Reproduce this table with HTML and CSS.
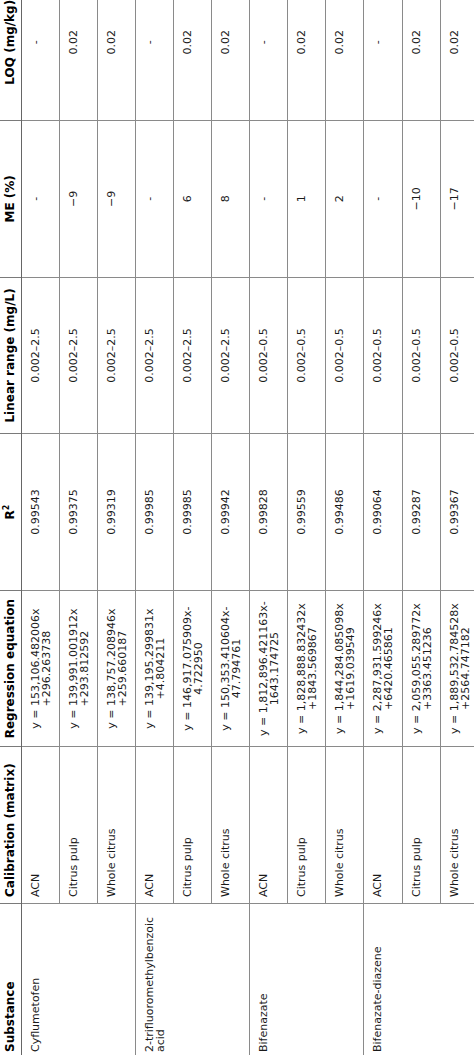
FILE: index.html
```html
<!DOCTYPE html>
<html lang="en">
<head>
<meta charset="utf-8">
<title>Calibration table</title>
<link rel="stylesheet" href="styles.css">
</head>
<body>
<div class="page">
<table class="data">
<colgroup>
<col class="c-first"><col class="c"><col class="c"><col class="c"><col class="c"><col class="c"><col class="c">
</colgroup>
<thead>
<tr>
<th class="l">Substance</th>
<th class="l">Calibration (matrix)</th>
<th>Regression equation</th>
<th>R<sup>2</sup></th>
<th>Linear range (mg/L)</th>
<th>ME (%)</th>
<th>LOQ (mg/kg)</th>
</tr>
</thead>
<tbody>
<tr>
<td rowspan="3" class="l sub">Cyflumetofen</td>
<td class="l">ACN</td>
<td>y = 153,106.482006x<br>+296.263738</td>
<td>0.99543</td><td>0.002–2.5</td><td>-</td><td>-</td>
</tr>
<tr>
<td class="l">Citrus pulp</td>
<td>y = 139,991.001912x<br>+293.812592</td>
<td>0.99375</td><td>0.002–2.5</td><td>−9</td><td>0.02</td>
</tr>
<tr>
<td class="l">Whole citrus</td>
<td>y = 138,757.208946x<br>+259.660187</td>
<td>0.99319</td><td>0.002–2.5</td><td>−9</td><td>0.02</td>
</tr>
<tr>
<td rowspan="3" class="l sub">2-trifluoromethylbenzoic<br>acid</td>
<td class="l">ACN</td>
<td>y = 139,195.299831x<br>+4.804211</td>
<td>0.99985</td><td>0.002–2.5</td><td>-</td><td>-</td>
</tr>
<tr>
<td class="l">Citrus pulp</td>
<td>y = 146,917.075909x-<br>4.722950</td>
<td>0.99985</td><td>0.002–2.5</td><td>6</td><td>0.02</td>
</tr>
<tr>
<td class="l">Whole citrus</td>
<td>y = 150,353.410604x-<br>47.794761</td>
<td>0.99942</td><td>0.002–2.5</td><td>8</td><td>0.02</td>
</tr>
<tr>
<td rowspan="3" class="l sub">Bifenazate</td>
<td class="l">ACN</td>
<td>y = 1,812,896.421163x-<br>1643.174725</td>
<td>0.99828</td><td>0.002–0.5</td><td>-</td><td>-</td>
</tr>
<tr>
<td class="l">Citrus pulp</td>
<td>y = 1,828,888.832432x<br>+1843.569867</td>
<td>0.99559</td><td>0.002–0.5</td><td>1</td><td>0.02</td>
</tr>
<tr>
<td class="l">Whole citrus</td>
<td>y = 1,844,284.085098x<br>+1619.039549</td>
<td>0.99486</td><td>0.002–0.5</td><td>2</td><td>0.02</td>
</tr>
<tr>
<td rowspan="3" class="l sub">Bifenazate-diazene</td>
<td class="l">ACN</td>
<td>y = 2,287,931.599246x<br>+6420.465861</td>
<td>0.99064</td><td>0.002–0.5</td><td>-</td><td>-</td>
</tr>
<tr>
<td class="l">Citrus pulp</td>
<td>y = 2,059,055.289772x<br>+3363.451236</td>
<td>0.99287</td><td>0.002–0.5</td><td>−10</td><td>0.02</td>
</tr>
<tr>
<td class="l">Whole citrus</td>
<td>y = 1,889,532.784528x<br>+2564.747182</td>
<td>0.99367</td><td>0.002–0.5</td><td>−17</td><td>0.02</td>
</tr>
</tbody>
</table>
</div>
</body>
</html>
```
FILE: styles.css
```css
html, body {
  margin: 0;
  padding: 0;
  background: #ffffff;
}

body {
  width: 474px;
  height: 1055px;
  overflow: hidden;
}

.page {
  width: 474px;
  height: 1055px;
  overflow: hidden;
}

/* The table is printed turned on its side (reads bottom-to-top). */
.data {
  border-collapse: collapse;
  table-layout: fixed;
  width: 1094.6px;
  font-family: "DejaVu Sans", "Liberation Sans", sans-serif;
  font-size: 11px;
  line-height: 11px;
  color: #1a1a1a;
  transform-origin: 0 0;
  transform: translate(0px, 1059px) rotate(-90deg);
}

.c-first {
  width: 155px;
}

.c {
  width: 156.6px;
}

.data thead tr {
  height: 21px;
}

.data tbody tr {
  height: 38.12px;
}

.data th {
  font-size: 12px;
  font-weight: bold;
  line-height: 14px;
  color: #000000;
  padding: 0 6px;
  text-align: center;
  vertical-align: middle;
  white-space: nowrap;
  border-bottom: 1px solid #666666;
  border-left: 1px solid #7a7a7a;
  border-right: 1px solid #7a7a7a;
}

.data th sup {
  font-size: 8px;
  line-height: 0;
  vertical-align: 5px;
}

.data td {
  padding: 8px 6px 0;
  text-align: center;
  vertical-align: top;
  white-space: nowrap;
  border: 1px solid #8a8a8a;
}

.data .l {
  text-align: left;
}

.data td.sub {
  white-space: normal;
}
```
